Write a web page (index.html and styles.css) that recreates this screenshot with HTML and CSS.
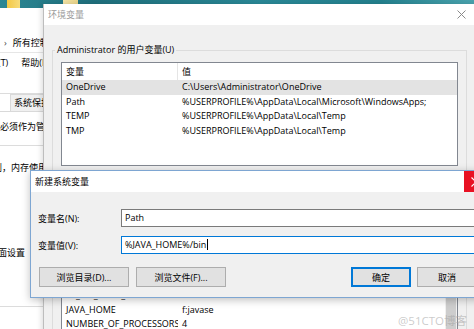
FILE: index.html
```html
<!DOCTYPE html>
<html lang="zh-CN">
<head>
    <meta charset="UTF-8">
    <title>新建系统变量</title>
    <link rel="stylesheet" href="styles.css">
</head>
<body>
<div class="screen">
    <div class="desktop">
        <span class="folder folder-a"></span>
        <span class="folder folder-b"></span>
    </div>

    <!-- control panel window behind the dialogs -->
    <div class="cpanel">
        <div class="cp-title"></div>
        <div class="cp-address"><span class="chev">›</span>所有控制面板项</div>
        <div class="cp-menu"><span class="menu-cut">工具(T)</span><span>帮助(H)</span></div>
        <div class="cp-band"></div>
        <div class="cp-tabs"><span class="tab">系统保护</span></div>
        <div class="cp-body">
            <p class="cp-text cp-admin">必须作为管理员登录</p>
            <div class="cp-group">
                <p class="cp-text cp-perf">到，内存使用</p>
                <p class="cp-text cp-desk">桌面设置</p>
            </div>
        </div>
    </div>

    <!-- 环境变量 -->
    <div class="envdlg">
        <div class="titlebar inactive">
            <span>环境变量</span>
            <svg class="close-x" width="9" height="9" viewBox="0 0 9 9"><path d="M0.5 0.5L8.5 8.5M8.5 0.5L0.5 8.5" stroke="#8a8a8a" stroke-width="1"/></svg>
        </div>
        <div class="env-body">
            <fieldset class="group">
                <legend>Administrator 的用户变量(U)</legend>
                <div class="list user-list">
                    <div class="lv-row lv-head"><span>变量</span><span>值</span></div>
                    <div class="lv-row selected"><span>OneDrive</span><span>C:\Users\Administrator\OneDrive</span></div>
                    <div class="lv-row"><span>Path</span><span>%USERPROFILE%\AppData\Local\Microsoft\WindowsApps;</span></div>
                    <div class="lv-row"><span>TEMP</span><span>%USERPROFILE%\AppData\Local\Temp</span></div>
                    <div class="lv-row"><span>TMP</span><span>%USERPROFILE%\AppData\Local\Temp</span></div>
                </div>
                <div class="group-buttons">
                    <button class="btn">新建(N)...</button>
                    <button class="btn">编辑(E)...</button>
                    <button class="btn">删除(D)</button>
                </div>
            </fieldset>
            <fieldset class="group sys-group">
                <legend>系统变量(S)</legend>
                <div class="list sys-list">
                    <div class="lv-rows">
                        <div class="lv-row lv-head"><span>变量</span><span>值</span></div>
                        <div class="lv-row"><span>CLASSPATH</span><span>.;%JAVA_HOME%\lib</span></div>
                        <div class="lv-row"><span>ComSpec</span><span>C:\Windows\system32\cmd.exe</span></div>
                        <div class="lv-row"><span>DriverData</span><span>C:\Windows\System32\Drivers\DriverData</span></div>
                        <div class="lv-row"><span>FP_NO_HOST_CHECK</span><span>NO</span></div>
                        <div class="lv-row"><span>JAVA_HOME</span><span>f:javase</span></div>
                        <div class="lv-row"><span>NUMBER_OF_PROCESSORS</span><span>4</span></div>
                    </div>
                    <div class="scrollbar"><span class="thumb"></span></div>
                </div>
            </fieldset>
        </div>
    </div>

    <!-- 新建系统变量 -->
    <div class="newdlg">
        <div class="titlebar">
            <span>新建系统变量</span>
            <span class="close-red">
                <svg width="10" height="10" viewBox="0 0 10 10"><path d="M0.5 0.5L9.5 9.5M9.5 0.5L0.5 9.5" stroke="#fff" stroke-width="1.2"/></svg>
            </span>
        </div>
        <div class="new-body">
            <div class="fields">
                <label>变量名(N):</label>
                <div class="input">Path</div>
                <label>变量值(V):</label>
                <div class="input focus">%JAVA_HOME%/bin<span class="caret"></span></div>
            </div>
            <div class="btn-row">
                <button class="btn wide">浏览目录(D)...</button>
                <button class="btn wide">浏览文件(F)...</button>
                <button class="btn default">确定</button>
                <button class="btn">取消</button>
            </div>
        </div>
    </div>

    <div class="watermark">@51CTO博客</div>
</div>
</body>
</html>
```

FILE: styles.css
```css
* {
    box-sizing: border-box;
}

body {
    margin: 0;
    font-family: "Open Sans", "Noto Sans CJK SC", sans-serif;
    font-size: 9px;
    color: #000;
}

.screen {
    position: relative;
    width: 474px;
    height: 329px;
    overflow: hidden;
    background: #fff;
}

/* desktop strip at the very top */
.desktop {
    position: absolute;
    left: 0;
    top: 0;
    width: 474px;
    height: 8px;
    display: flex;
    background: linear-gradient(to right, #2b8794, #1f6f7c 20%, #2a8896 55%, #23808d 80%, #4aa3ae);
}

.folder {
    height: 8px;
    background: linear-gradient(to right, #f3c845, #f7dc7a);
}

.folder-a {
    margin-left: 7px;
    width: 13px;
}

.folder-b {
    margin-left: 43px;
    width: 15px;
    background: linear-gradient(to right, #f2e2a6, #e9d489);
}

/* control panel window */
.cpanel {
    position: absolute;
    left: 0;
    top: 8px;
    width: 200px;
    height: 321px;
    background: #fff;
}

.cp-title {
    height: 26px;
}

.cp-address {
    height: 19px;
    line-height: 18px;
    padding-left: 4px;
    border-bottom: 1px solid #e6e6e6;
    white-space: nowrap;
}

.chev {
    margin-right: 6px;
    color: #444;
}

.cp-menu {
    height: 20px;
    line-height: 20px;
    white-space: nowrap;
    display: flex;
    gap: 13px;
}

.menu-cut {
    margin-left: -20px;
}

.cp-band {
    height: 21px;
    border-bottom: 1px solid #dcdcdc;
}

.cp-tabs {
    height: 17px;
    padding-left: 10px;
    background: #fff;
    display: flex;
}

.tab {
    background: #f0f0f0;
    border: 1px solid #d9d9d9;
    border-bottom: none;
    padding: 0 3px;
    line-height: 16px;
    white-space: nowrap;
}

.cp-body {
    border-top: 1px solid #d9d9d9;
}

.cp-text {
    margin: 0;
    white-space: nowrap;
    line-height: 12px;
}

.cp-admin {
    margin-top: 9px;
}

.cp-group {
    margin-top: 12px;
    border-top: 1px solid #dcdcdc;
    height: 162px;
    border-bottom: 1px solid #dcdcdc;
}

.cp-perf {
    margin-top: 16px;
    margin-left: -7px;
}

.cp-desk {
    margin-top: 73px;
    margin-left: -11px;
}

/* title bars */
.titlebar {
    height: 21px;
    background: #fff;
    display: flex;
    align-items: center;
    padding-left: 4px;
    white-space: nowrap;
}

.titlebar.inactive {
    color: #9a9a9a;
}

.close-x {
    margin-left: auto;
    margin-right: 17px;
}

/* environment variables dialog */
.envdlg {
    position: absolute;
    left: 43px;
    top: 4px;
    width: 440px;
    height: 330px;
    background: #f0f0f0;
    border-left: 1px solid #bdbdbd;
    box-shadow: -2px 0 5px rgba(0, 0, 0, 0.12);
}

.env-body {
    padding: 19px 0 0 8px;
}

.group {
    margin: 0;
    width: 415px;
    border: 1px solid #dcdcdc;
    padding: 0 8px 8px;
}

.group legend {
    padding: 0 2px;
    margin-left: -6px;
    line-height: 12px;
}

.sys-group {
    margin-top: 6px;
}

.list {
    margin-top: 6px;
    background: #fff;
    border: 1px solid #828790;
}

.user-list {
    height: 104px;
}

.lv-row {
    display: grid;
    grid-template-columns: 116px 266px;
    height: 14.67px;
    line-height: 14.67px;
    white-space: nowrap;
}

.lv-row span {
    padding-left: 4px;
    overflow: hidden;
}

.lv-head {
    height: 17px;
    line-height: 17px;
}

.lv-head span:first-child {
    border-right: 1px solid #e5e5e5;
}

.lv-row.selected {
    background: #e3e3e3;
}

.group-buttons {
    margin-top: 7px;
    display: flex;
    justify-content: flex-end;
    gap: 6px;
}

.sys-list {
    height: 110px;
    display: flex;
}

.lv-rows {
    flex: 1;
}

.scrollbar {
    width: 12px;
    background: #f0f0f0;
    padding: 0 1px;
    display: flex;
}

.thumb {
    flex: 1;
    margin-top: 30px;
    background: #cdcdcd;
}

/* buttons */
.btn {
    font: inherit;
    height: 20px;
    width: 60px;
    padding: 0;
    background: #e1e1e1;
    border: 1px solid #adadad;
    color: #000;
}

.btn.wide {
    width: 90px;
}

.btn.default {
    border-color: #0078d7;
    box-shadow: inset 0 0 0 1px #0078d7;
    margin-left: auto;
}

/* new system variable dialog */
.newdlg {
    position: absolute;
    left: 30px;
    top: 170px;
    width: 469px;
    height: 128px;
    background: #f0f0f0;
    border: 1px solid #7ea6d2;
    box-shadow: 0 2px 8px rgba(0, 0, 0, 0.25);
}

.close-red {
    margin-left: auto;
    width: 34px;
    height: 21px;
    background: #e81123;
    display: flex;
    align-items: center;
    padding-left: 7px;
}

.new-body {
    padding: 17px 11px 10px 7px;
}

.fields {
    display: grid;
    grid-template-columns: 83px 1fr;
    row-gap: 9px;
    align-items: center;
}

.input {
    height: 18px;
    line-height: 16px;
    background: #fff;
    border: 1px solid #7a7a7a;
    padding-left: 3px;
    white-space: nowrap;
}

.input.focus {
    border-color: #0078d7;
}

.caret {
    display: inline-block;
    width: 1px;
    height: 11px;
    background: #000;
    vertical-align: -2px;
    margin-left: 1px;
}

.btn-row {
    margin: 13px 10px 0 1px;
    display: flex;
    gap: 7px;
}

.btn-row .btn + .btn:last-child {
    margin-left: -1px;
}

.watermark {
    position: absolute;
    left: 398px;
    top: 313px;
    font-size: 11.5px;
    line-height: 16px;
    color: rgba(160, 160, 160, 0.55);
    white-space: nowrap;
}
```
